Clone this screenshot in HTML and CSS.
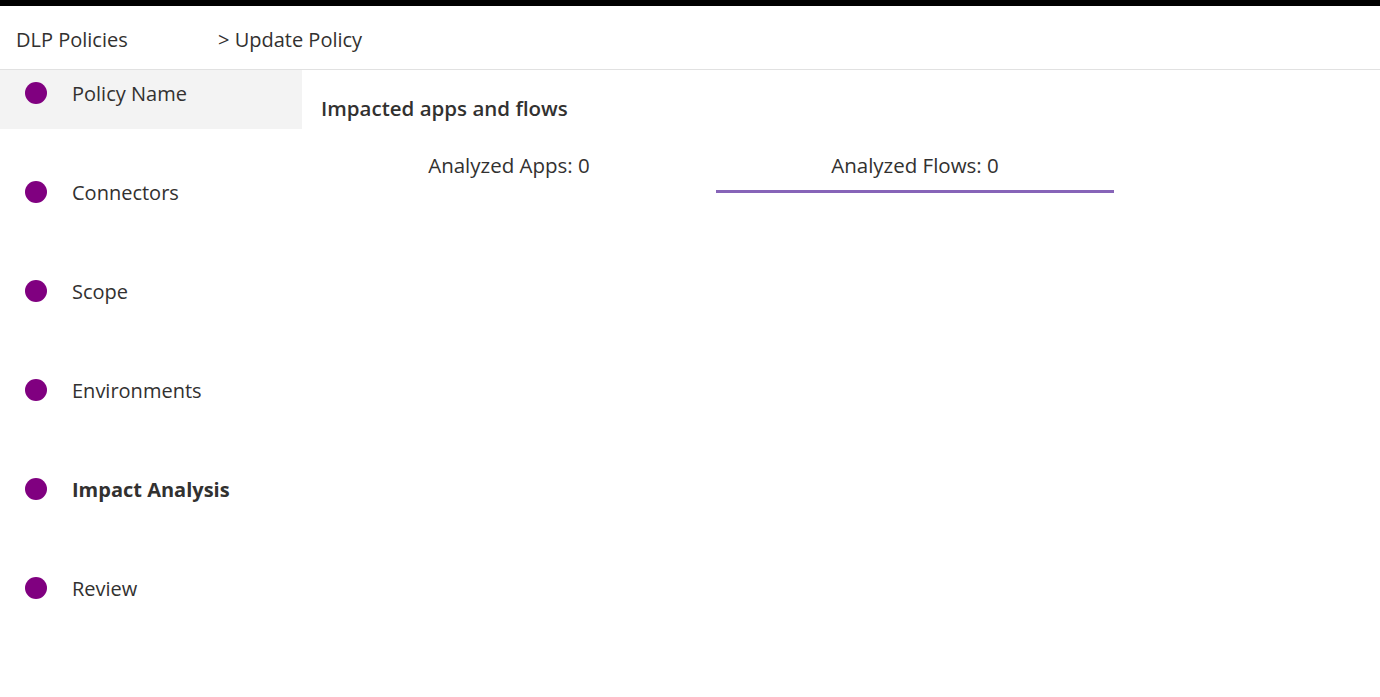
FILE: index.html
```html
<!DOCTYPE html>
<html lang="en">
<head>
<meta charset="utf-8">
<title>Update Policy</title>
<link rel="stylesheet" href="styles.css">
</head>
<body>
<div class="topbar"></div>
<header class="header">
  <span class="crumb crumb-root">DLP Policies</span>
  <span class="crumb">&gt; Update Policy</span>
</header>
<div class="layout">
  <nav class="sidebar">
    <div class="step step-active"><span class="dot"></span><span class="label">Policy Name</span></div>
    <div class="step"><span class="dot"></span><span class="label">Connectors</span></div>
    <div class="step"><span class="dot"></span><span class="label">Scope</span></div>
    <div class="step"><span class="dot"></span><span class="label">Environments</span></div>
    <div class="step"><span class="dot"></span><span class="label label-bold">Impact Analysis</span></div>
    <div class="step"><span class="dot"></span><span class="label">Review</span></div>
  </nav>
  <main class="main">
    <h2 class="heading">Impacted apps and flows</h2>
    <div class="tabs">
      <div class="tab">Analyzed Apps: 0</div>
      <div class="tab tab-selected">Analyzed Flows: 0</div>
    </div>
  </main>
</div>
</body>
</html>
```
FILE: styles.css
```css
html, body {
  margin: 0;
  padding: 0;
  background: #ffffff;
}
body {
  font-family: "Open Sans", "Noto Sans", "Liberation Sans", sans-serif;
  color: #323130;
  width: 1380px;
  height: 697px;
  overflow: hidden;
}
.topbar {
  height: 6px;
  background: #000000;
}
.header {
  display: flex;
  align-items: center;
  height: 64px;
  box-sizing: border-box;
  padding-top: 4px;
  border-bottom: 1px solid #e1e1e1;
  padding-left: 16px;
  font-size: 20px;
}
.crumb-root {
  width: 202px;
}
.layout {
  display: flex;
}
.sidebar {
  width: 302px;
  display: flex;
  flex-direction: column;
  gap: 40px;
  flex-shrink: 0;
}
.step {
  height: 59px;
  display: flex;
  align-items: flex-start;
  padding: 11px 0 0 25px;
  box-sizing: border-box;
  gap: 25px;
}
.step-active {
  background: #f3f3f3;
}
.dot {
  width: 22px;
  height: 22px;
  border-radius: 50%;
  background: #800080;
  margin-top: 1px;
  flex-shrink: 0;
}
.label {
  font-size: 20px;
  line-height: 26px;
}
.label-bold {
  font-weight: 700;
}
.main {
  flex: 1;
  padding: 24px 0 0 8px;
}
.heading {
  margin: 0 0 18px 11px;
  font-size: 20.5px;
  line-height: 28px;
  font-weight: 600;
}
.tabs {
  display: flex;
  gap: 8px;
}
.tab {
  width: 398px;
  text-align: center;
  font-size: 20.5px;
  line-height: 28px;
  padding: 11px 0;
  border-bottom: 3px solid transparent;
}
.tab-selected {
  border-bottom-color: #8764b8;
}
```
